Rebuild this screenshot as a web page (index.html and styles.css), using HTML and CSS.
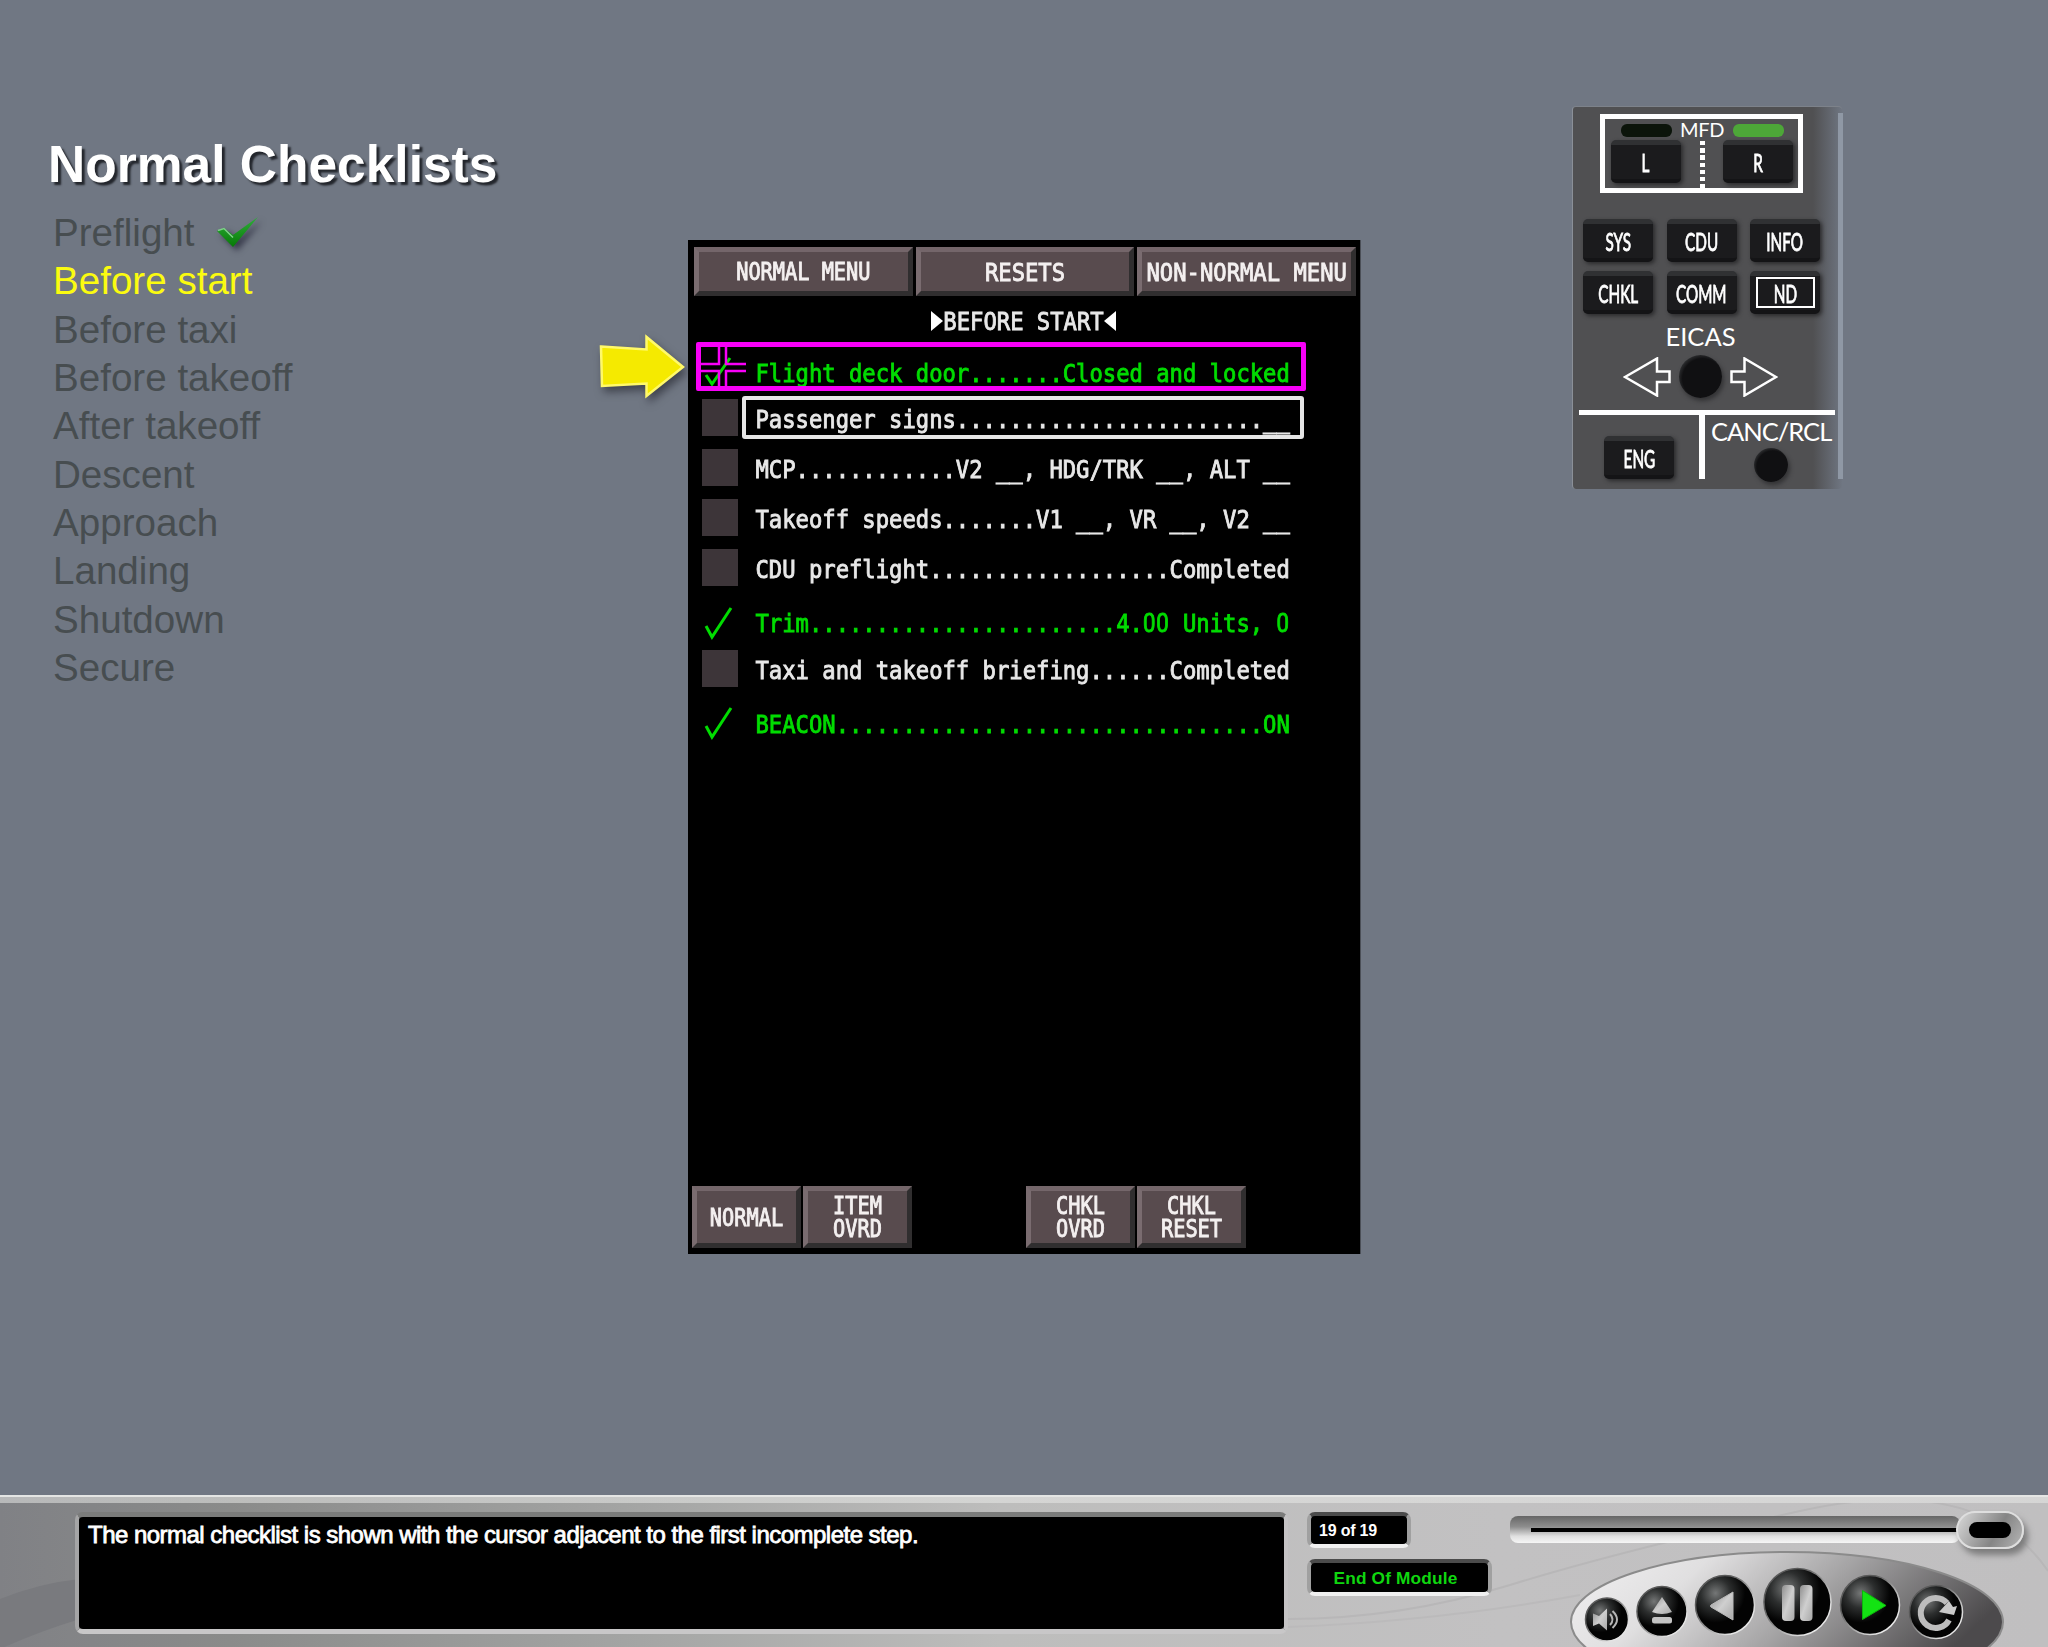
FILE: index.html
```html
<!DOCTYPE html>
<html lang="en">
<head>
  <meta charset="UTF-8" />
  <meta name="viewport" content="width=device-width, initial-scale=1.0" />
  <title>Normal Checklists - Before start</title>
  <link rel="stylesheet" href="styles.css">
</head>
<body>
  <div class="stage">
    <div class="sidebar">
      <h1>Normal Checklists</h1>
      <ul class="topics">
        <li>Preflight
          <svg class="done" width="56" height="40" viewBox="0 0 56 40">
            <defs>
              <linearGradient id="tick" x1="0" y1="0" x2="0" y2="1"><stop offset="0" stop-color="#2fae3a"/><stop offset="1" stop-color="#067a06"/></linearGradient>
            </defs>
            <path d="M2 12l7-3 9 7 25-18-25 30z" fill="url(#tick)"/>
            <path d="M3 11.500l6-2 9 9" fill="none" stroke="#7fcf8a" stroke-width="1.5"/>
          </svg>
        </li>
        <li class="active">Before start</li>
        <li>Before taxi</li>
        <li>Before takeoff</li>
        <li>After takeoff</li>
        <li>Descent</li>
        <li>Approach</li>
        <li>Landing</li>
        <li>Shutdown</li>
        <li>Secure</li>
      </ul>
    </div>

    <!-- MFD checklist page -->
    <div class="mfd">
      <div class="menu">
        <div class="key"><span class="tight">NORMAL MENU</span></div>
        <div class="key"><span>RESETS</span></div>
        <div class="key"><span>NON-NORMAL MENU</span></div>
      </div>
      <div class="page-title"><i class="tri right"></i><span>BEFORE START</span><i class="tri left"></i></div>

      <div class="rows">
        <div class="row ok">
          <svg class="check" viewBox="0 0 37 37"><path d="M4 27l6 9 18-26"/></svg>
          <span class="text">Flight deck door.......Closed and locked</span>
          <div class="highlight"></div>
          <svg class="cursor" width="46" height="42" viewBox="0 0 46 42"><path d="M19 0v18H1M26 0v18H46M19 42V25H1M26 42V25H46"/></svg>
        </div>
        <div class="row"><div class="box"></div><span class="text">Passenger signs.......................__</span><div class="frame"></div></div>
        <div class="row"><div class="box"></div><span class="text">MCP............V2 __, HDG/TRK __, ALT __</span></div>
        <div class="row"><div class="box"></div><span class="text">Takeoff speeds.......V1 __, VR __, V2 __</span></div>
        <div class="row"><div class="box"></div><span class="text">CDU preflight..................Completed</span></div>
        <div class="row ok">
          <svg class="check" viewBox="0 0 37 37"><path d="M4 27l6 11 19-29"/></svg>
          <span class="text">Trim.......................4.<span class="zero">00</span> Units, <span class="zero">0</span></span>
        </div>
        <div class="row"><div class="box"></div><span class="text">Taxi and takeoff briefing......Completed</span></div>
        <div class="row ok">
          <svg class="check" viewBox="0 0 37 37"><path d="M4 27l6 11 19-29"/></svg>
          <span class="text">BEACON................................ON</span>
        </div>
      </div>

      <div class="footer-keys">
        <div class="key"><span class="tight">NORMAL</span></div>
        <div class="key"><span class="tight">ITEM<br>OVRD</span></div>
        <div class="key gap"><span class="tight">CHKL<br>OVRD</span></div>
        <div class="key"><span class="tight">CHKL<br>RESET</span></div>
      </div>

      <svg class="pointer" width="100" height="80" viewBox="0 0 100 80">
        <path d="M13 17.500L58.500 20.500V8L95 38 58.500 67V54.500L14 57z" fill="#f5ea00" stroke="#fff96a" stroke-width="2.500"/>
      </svg>
    </div>

    <!-- display select panel -->
    <div class="panel">
      <div class="mfd-select">
        <div class="side"><i class="led"></i><div class="btn"><span>L</span></div></div>
        <div class="mid"><span>MFD</span><i></i></div>
        <div class="side"><i class="led on"></i><div class="btn"><span>R</span></div></div>
      </div>
      <div class="btns">
        <div class="btn"><span>SYS</span></div>
        <div class="btn"><span>CDU</span></div>
        <div class="btn"><span>INFO</span></div>
        <div class="btn"><span>CHKL</span></div>
        <div class="btn"><span>COMM</span></div>
        <div class="btn"><b></b><span>ND</span></div>
      </div>
      <div class="label eicas">EICAS</div>
      <div class="eicas-row">
        <svg width="48" height="40" viewBox="0 0 48 40"><path d="M2 20L34 1.500V14.500H46.500V25H34V38.500z"/></svg>
        <i class="knob"></i>
        <svg width="48" height="40" viewBox="0 0 48 40"><path d="M46 20L14.500 1.500V14.500H1.500V25H14.500V38.500z"/></svg>
      </div>
      <div class="lower">
        <div class="eng"><div class="btn"><span>ENG</span></div></div>
        <div class="canc"><div class="label">CANC/RCL</div><i class="knob small"></i></div>
      </div>
    </div>
  </div>

  <div class="player">
    <svg class="waves" width="2048" height="144" viewBox="0 0 2048 144" preserveAspectRatio="none">
      <path d="M0 96Q40 80 80 76V116Q40 128 0 146z" fill="#797a7e"/>
      <path d="M1288 116Q1400 116 1510 82T1800 8 2048 68" fill="none" stroke="#b8b7b8" stroke-width="2"/>
      <path d="M1288 124Q1440 118 1580 92" fill="none" stroke="#bbbabb" stroke-width="2"/>
    </svg>
    <div class="caption">The normal checklist is shown with the cursor adjacent to the first incomplete step.</div>
    <div class="status">
      <div class="lcd count">19 of 19</div>
      <div class="lcd end">End Of Module</div>
    </div>
    <div class="controls">
      <div class="slider"><i class="line"></i><i class="thumb"></i></div>
      <svg class="deck" width="460" height="104" viewBox="0 0 460 104">
        <defs>
          <linearGradient id="pod" x1="0" y1="0" x2="1" y2=".35"><stop offset="0" stop-color="#f2f1f2"/><stop offset=".3" stop-color="#e0dfe0"/><stop offset=".6" stop-color="#a5a4a5"/><stop offset="1" stop-color="#4c4a4c"/></linearGradient>
          <radialGradient id="ball" cx=".34" cy=".3" r=".5"><stop offset="0" stop-color="#757777"/><stop offset=".5" stop-color="#2c2e2e"/><stop offset="1" stop-color="#030303"/></radialGradient>
          <linearGradient id="rim" x1="0" y1="0" x2="1" y2="1"><stop offset=".3" stop-color="#5a5a5a"/><stop offset=".8" stop-color="#e6e6e6"/></linearGradient>
          <linearGradient id="ico" x1="0" y1="0" x2="1" y2="1"><stop offset="0" stop-color="#8f8f8f"/><stop offset=".5" stop-color="#cfcfcf"/><stop offset="1" stop-color="#a8a8a8"/></linearGradient>
        </defs>
        <ellipse cx="227" cy="76" rx="216" ry="70" fill="url(#pod)" stroke="#8b8b8b" stroke-width="2"/>
        <g fill="url(#ball)" stroke="url(#rim)" stroke-width="1.5">
          <circle cx="47" cy="73.500" r="21.500"/>
          <circle cx="102" cy="65.500" r="25"/>
          <circle cx="165" cy="59" r="29.500"/>
          <circle cx="237.500" cy="56" r="33.500"/>
          <circle cx="310" cy="59" r="29.500"/>
          <circle cx="376" cy="66" r="26.500"/>
        </g>
        <!-- sound -->
        <path d="M33 67.500l6 2.500 8-7.500v22l-8-7-6 2.500z" fill="url(#ico)"/>
        <path d="M50 68q5 5.500 0 11M52.500 65q9 8.500 0 17" fill="none" stroke="#b5b5b5" stroke-width="2"/>
        <!-- eject -->
        <path d="M102 51l10 15q-10 4-20 0z" fill="url(#ico)"/>
        <rect x="92" y="71" width="20" height="6.500" rx="2.500" fill="#c4c4c4"/>
        <!-- back -->
        <path d="M173 46v28L151 61q-1-1 0-2z" fill="url(#ico)" stroke="#bbb"/>
        <!-- pause -->
        <rect x="222" y="39" width="12.500" height="36" rx="4" fill="url(#ico)"/>
        <rect x="240" y="39" width="12.500" height="36" rx="4" fill="url(#ico)"/>
        <!-- play -->
        <path d="M302.500 44.500L326 59.500 302.500 73.500z" fill="#13e313" stroke="#0cb50c"/>
        <!-- replay -->
        <path d="M389 74A15 15 0 1 1 387 57" fill="none" stroke="#bdbdbd" stroke-width="6"/>
        <path d="M379 66l15 3 3-9-4 1-4-6z" fill="#c9c9c9"/>
      </svg>
    </div>
  </div>
</body>
</html>
```
FILE: styles.css
```css
* { box-sizing: border-box; }
body { margin: 0; width: 2048px; height: 1647px; display: flex; flex-direction: column; overflow: hidden; background: #707783; color: #fff; font-family: "Liberation Sans", Arial, sans-serif; }
i { display: block; font-style: normal; }

.stage { flex: 1; display: flex; align-items: flex-start; }

/* topic list */
.sidebar { width: 688px; padding: 136px 0 0 48px; }
h1 { margin: 0; font-size: 51.5px; line-height: 57px; text-shadow: 3px 3px 2px #23262c; }
.topics { list-style: none; margin: 16px 0 0 5px; padding: 0; font-size: 38.6px; line-height: 48.35px; color: #474d50; }
.topics li { height: 48.35px; display: flex; white-space: nowrap; }
.topics .active { color: #fbfb10; }
.done { margin: 10px 0 0 20px; overflow: visible; filter: drop-shadow(4px 4px 3px rgba(30, 32, 50, 0.7)); }

/* MFD */
.mfd { position: relative; width: 673px; height: 1014px; margin-top: 240px; padding: 7px 4px 6px 6px; background: #000; border-right: 1px solid #4b4f57; display: flex; flex-direction: column; font-family: "DejaVu Sans Mono", "Liberation Mono", monospace; font-size: 22.2px; color: #e8e8e8; -webkit-text-stroke: 0.8px; }
.menu { display: flex; gap: 3px; height: 49px; }
.menu .key { flex: 1; }
.key { display: flex; align-items: center; justify-content: center; text-align: center; background: #584b4e; border: 5px solid; border-color: #74666a #302e2f #302e2f #7a6c70; color: #f4f0f0; white-space: nowrap; }
.key span { transform: scaleY(1.14); line-height: 20px; }
.key .tight { font-size: 20.3px; line-height: 18.2px; transform: scaleY(1.25); }
.page-title { height: 52px; display: flex; align-items: center; justify-content: center; line-height: 48px; padding: 0 3px 2px 0; }
.page-title span { transform: scaleY(1.14); }
.tri { border: 10px solid transparent; }
.tri.right { border-left: 12px solid #fff; border-right: 0; }
.tri.left { border-right: 12px solid #fff; border-left: 0; }

.row { position: relative; display: flex; align-items: flex-start; height: 50.2px; padding-left: 8px; }
.box { width: 36px; height: 37px; margin-top: 0.5px; background: #3d3539; }
.check { width: 37px; height: 37px; overflow: visible; fill: none; stroke: #00dc00; stroke-width: 3; }
.text { position: absolute; left: 61.500px; top: 0.5px; line-height: 41px; white-space: pre; transform: scaleY(1.14); }
.ok { color: #00dc00; }
.ok .text { top: 4.5px; }
.zero { font-family: Roboto, sans-serif; letter-spacing: 0.9px; }
.highlight { position: absolute; left: 2px; top: -6px; width: 610px; height: 49px; border: 5px solid #f800f8; border-radius: 2px; }
.cursor { position: absolute; left: 6px; top: -2px; width: 46px; height: 42px; fill: none; stroke: #f800f8; stroke-width: 2.5; }
.frame { position: absolute; left: 48px; top: -2px; width: 562px; height: 43px; border: 4px solid #e6e6e6; border-radius: 3px; }

.footer-keys { display: flex; gap: 2px; height: 62px; margin-top: auto; margin-left: -2px; }
.footer-keys .key { width: 109px; }
.footer-keys .gap { margin-left: 112px; }
.pointer { position: absolute; left: -100px; top: 89px; filter: drop-shadow(3px 5px 4px rgba(30, 32, 40, 0.6)); }

/* display select panel */
.panel { position: relative; width: 270px; height: 383px; margin: 106px 0 0 211px; padding: 7px 0 0 6px; border-top: 1px solid #7d828a; border-left: 1px solid #8b9098; border-radius: 4px; background: linear-gradient(to right, #505052 240px, #707783 270px); font-family: Lato, sans-serif; }
.panel::after { content: ""; position: absolute; left: 265px; top: 6px; width: 5px; height: 366px; background: #8f98a5; }
.btn { position: relative; width: 70px; height: 43px; display: flex; align-items: center; justify-content: center; background: #1b1b1d; border-top: 5px solid #303133; border-bottom: 4px solid #141416; border-radius: 5px; box-shadow: 2px 2px 4px #2a2a2c; }
.btn span { font-size: 25.5px; line-height: 34px; transform: scaleX(0.6); -webkit-text-stroke: 0.9px #fff; }
.btn b { position: absolute; left: 6px; top: 1px; width: 59px; height: 31px; border: 2.500px solid #fff; }
.mfd-select { width: 203px; height: 79px; margin-left: 21px; border: 5px solid #fff; padding: 5px 5px 0 6px; display: flex; justify-content: space-between; }
.side { display: flex; flex-direction: column; align-items: center; gap: 3px; }
.led { width: 51px; height: 13px; border-radius: 6px; background: #0b140a; }
.led.on { background: #4da738; }
.mid { width: 42px; display: flex; flex-direction: column; align-items: center; }
.mid span { font-size: 20px; line-height: 16px; letter-spacing: -0.4px; margin-top: -3px; }
.mid i { width: 5px; height: 51px; margin-top: 4px; background: repeating-linear-gradient(#fff 0 4.500px, transparent 4.500px 7.200px); }
.btns { display: grid; grid-template-columns: repeat(3, 70px); gap: 8.500px 13.500px; margin: 26px 0 0 4px; }
.label { font-size: 25.500px; line-height: 30px; }
.eicas { width: 243px; margin-top: 7px; text-align: center; }
.eicas-row { display: flex; align-items: center; justify-content: center; width: 243px; gap: 8px; height: 48px; margin-top: 2px; }
.eicas-row path { fill: none; stroke: #fff; stroke-width: 2.500; }
.knob { width: 43px; height: 43px; border-radius: 50%; background: radial-gradient(circle at 55% 55%, #101012 60%, #303133 75%); box-shadow: 2px 3px 4px #333335; }
.knob.small { width: 34px; height: 34px; margin: 2px 0 0 49px; }
.lower { display: flex; width: 256px; height: 69px; margin-top: 9px; border-top: 5px solid #fff; }
.eng { flex: none; width: 126px; border-right: 6px solid #fff; padding: 21px 0 0 25px; }
.canc .label { margin: 1px 0 0 6px; letter-spacing: -1px; }

/* player bar */
.player { position: relative; height: 152px; display: flex; align-items: flex-start; border-top: 2px solid #e4e5e4; background: linear-gradient(#e8e9e788 0 6px, transparent 6px), linear-gradient(to right, #808185 0, #8a8b8a 230px, #a4a5a4 640px, #bdbdbc 1000px, #c2c1c2 1500px, #c0bfc0); }
.waves { position: absolute; left: 0; top: 6px; }
.caption { position: relative; width: 1213px; height: 122px; margin: 15px 0 0 75px; padding: 4px 0 0 9px; border: 5px solid; border-width: 5px 4px; border-color: #7b7c7b #c4c3c4 #c8c7c8 #a5a5a6; border-radius: 8px; background: #000; font-size: 24px; line-height: 27px; letter-spacing: -0.52px; -webkit-text-stroke: 0.8px #fff; }
.status { position: relative; margin: 15px 0 0 19px; width: 203px; }
.lcd { background: #000; border: 4px solid; border-color: #4b4b4b #a0a0a0 #f0f0f0 #a0a0a0; border-radius: 8px; font-weight: bold; }
.count { width: 104px; height: 36px; font-size: 16px; line-height: 30px; padding-left: 8px; letter-spacing: -0.2px; }
.end { width: 185px; height: 37px; margin-top: 11px; font-size: 17.3px; line-height: 31px; letter-spacing: 0.15px; text-align: center; padding-right: 8px; color: #0fd60f; }
.controls { position: relative; width: 538px; }
.slider { position: relative; height: 27px; width: 450px; margin-top: 19px; border-radius: 8px; background: linear-gradient(#666, #8e8e8e 40%, #e0e0e0 75%, #f6f6f6); }
.line { position: absolute; left: 21px; top: 12px; width: 430px; height: 4px; background: #000; }
.thumb { position: absolute; left: 446px; top: -5px; width: 68px; height: 38px; border-radius: 19px; border: 2px solid #dedede; background: linear-gradient(120deg, #d8d8d8, #858585 60%, #b5b5b5); box-shadow: 4px 6px 6px #7c7c7c; }
.thumb::after { content: ""; position: absolute; left: 11px; top: 9px; width: 42px; height: 16px; border-radius: 8px; background: #000; }
.deck { display: block; margin: 3px 0 0 50px; }
```
